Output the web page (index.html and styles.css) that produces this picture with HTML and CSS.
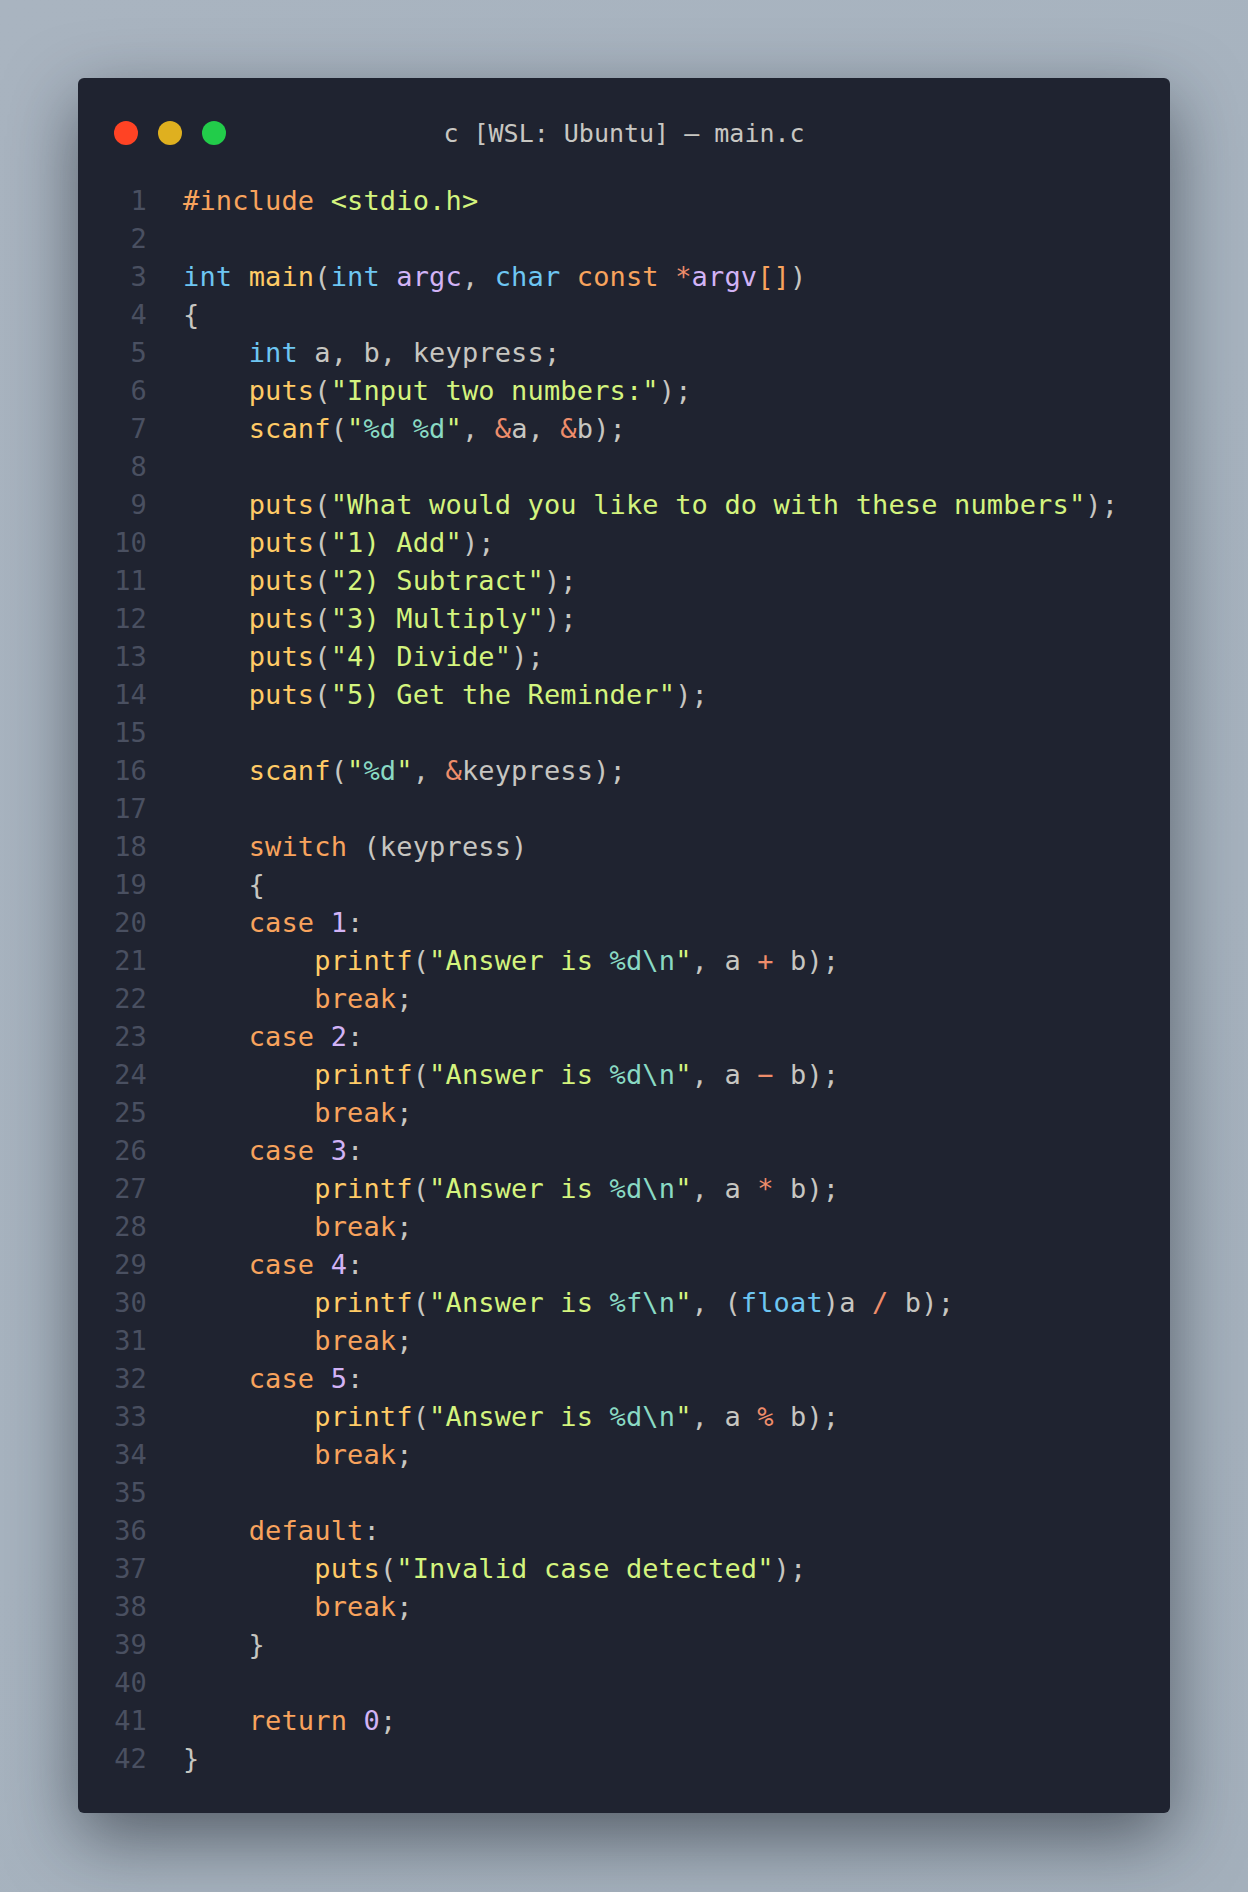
FILE: index.html
```html
<!DOCTYPE html>
<html lang="en">
<head>
<meta charset="utf-8">
<title>main.c</title>
<link rel="stylesheet" href="styles.css">
</head>
<body>
<div class="window">
  <div class="titlebar">
    <div class="dots">
      <span class="dot red"></span>
      <span class="dot yellow"></span>
      <span class="dot green"></span>
    </div>
    <div class="title">c [WSL: Ubuntu] — main.c</div>
    <div class="spacer"></div>
  </div>
  <div class="code">
<div class="ln"><span class="n">1</span><span class="c"><span class="k">#include</span> <span class="s">&lt;stdio.h&gt;</span></span></div>
<div class="ln"><span class="n">2</span><span class="c"></span></div>
<div class="ln"><span class="n">3</span><span class="c"><span class="t">int</span> <span class="f">main</span>(<span class="t">int</span> <span class="v">argc</span>, <span class="t">char</span> <span class="k">const</span> <span class="o">*</span><span class="v">argv</span><span class="k">[]</span>)</span></div>
<div class="ln"><span class="n">4</span><span class="c">{</span></div>
<div class="ln"><span class="n">5</span><span class="c">    <span class="t">int</span> a, b, keypress;</span></div>
<div class="ln"><span class="n">6</span><span class="c">    <span class="f">puts</span>(<span class="s">"Input two numbers:"</span>);</span></div>
<div class="ln"><span class="n">7</span><span class="c">    <span class="f">scanf</span>(<span class="s">"<span class="e">%d</span> <span class="e">%d</span>"</span>, <span class="o">&amp;</span>a, <span class="o">&amp;</span>b);</span></div>
<div class="ln"><span class="n">8</span><span class="c"></span></div>
<div class="ln"><span class="n">9</span><span class="c">    <span class="f">puts</span>(<span class="s">"What would you like to do with these numbers"</span>);</span></div>
<div class="ln"><span class="n">10</span><span class="c">    <span class="f">puts</span>(<span class="s">"1) Add"</span>);</span></div>
<div class="ln"><span class="n">11</span><span class="c">    <span class="f">puts</span>(<span class="s">"2) Subtract"</span>);</span></div>
<div class="ln"><span class="n">12</span><span class="c">    <span class="f">puts</span>(<span class="s">"3) Multiply"</span>);</span></div>
<div class="ln"><span class="n">13</span><span class="c">    <span class="f">puts</span>(<span class="s">"4) Divide"</span>);</span></div>
<div class="ln"><span class="n">14</span><span class="c">    <span class="f">puts</span>(<span class="s">"5) Get the Reminder"</span>);</span></div>
<div class="ln"><span class="n">15</span><span class="c"></span></div>
<div class="ln"><span class="n">16</span><span class="c">    <span class="f">scanf</span>(<span class="s">"<span class="e">%d</span>"</span>, <span class="o">&amp;</span>keypress);</span></div>
<div class="ln"><span class="n">17</span><span class="c"></span></div>
<div class="ln"><span class="n">18</span><span class="c">    <span class="k">switch</span> (keypress)</span></div>
<div class="ln"><span class="n">19</span><span class="c">    {</span></div>
<div class="ln"><span class="n">20</span><span class="c">    <span class="k">case</span> <span class="v">1</span>:</span></div>
<div class="ln"><span class="n">21</span><span class="c">        <span class="f">printf</span>(<span class="s">"Answer is <span class="e">%d\n</span>"</span>, a <span class="o">+</span> b);</span></div>
<div class="ln"><span class="n">22</span><span class="c">        <span class="k">break</span>;</span></div>
<div class="ln"><span class="n">23</span><span class="c">    <span class="k">case</span> <span class="v">2</span>:</span></div>
<div class="ln"><span class="n">24</span><span class="c">        <span class="f">printf</span>(<span class="s">"Answer is <span class="e">%d\n</span>"</span>, a <span class="o">−</span> b);</span></div>
<div class="ln"><span class="n">25</span><span class="c">        <span class="k">break</span>;</span></div>
<div class="ln"><span class="n">26</span><span class="c">    <span class="k">case</span> <span class="v">3</span>:</span></div>
<div class="ln"><span class="n">27</span><span class="c">        <span class="f">printf</span>(<span class="s">"Answer is <span class="e">%d\n</span>"</span>, a <span class="o">*</span> b);</span></div>
<div class="ln"><span class="n">28</span><span class="c">        <span class="k">break</span>;</span></div>
<div class="ln"><span class="n">29</span><span class="c">    <span class="k">case</span> <span class="v">4</span>:</span></div>
<div class="ln"><span class="n">30</span><span class="c">        <span class="f">printf</span>(<span class="s">"Answer is <span class="e">%f\n</span>"</span>, (<span class="t">float</span>)a <span class="o">/</span> b);</span></div>
<div class="ln"><span class="n">31</span><span class="c">        <span class="k">break</span>;</span></div>
<div class="ln"><span class="n">32</span><span class="c">    <span class="k">case</span> <span class="v">5</span>:</span></div>
<div class="ln"><span class="n">33</span><span class="c">        <span class="f">printf</span>(<span class="s">"Answer is <span class="e">%d\n</span>"</span>, a <span class="o">%</span> b);</span></div>
<div class="ln"><span class="n">34</span><span class="c">        <span class="k">break</span>;</span></div>
<div class="ln"><span class="n">35</span><span class="c"></span></div>
<div class="ln"><span class="n">36</span><span class="c">    <span class="k">default</span>:</span></div>
<div class="ln"><span class="n">37</span><span class="c">        <span class="f">puts</span>(<span class="s">"Invalid case detected"</span>);</span></div>
<div class="ln"><span class="n">38</span><span class="c">        <span class="k">break</span>;</span></div>
<div class="ln"><span class="n">39</span><span class="c">    }</span></div>
<div class="ln"><span class="n">40</span><span class="c"></span></div>
<div class="ln"><span class="n">41</span><span class="c">    <span class="k">return</span> <span class="v">0</span>;</span></div>
<div class="ln"><span class="n">42</span><span class="c">}</span></div>
  </div>
</div>
</body>
</html>
```
FILE: styles.css
```css
html, body {
  margin: 0;
  padding: 0;
}

body {
  width: 1248px;
  height: 1892px;
  box-sizing: border-box;
  padding: 78px;
  background: linear-gradient(135deg, #a9b4c0 0%, #a7b3bf 50%, #a4b0bc 100%);
  font-family: "DejaVu Sans Mono", "Liberation Mono", monospace;
}

.window {
  width: 1092px;
  height: 1735px;
  box-sizing: border-box;
  background: #1f2330;
  border-radius: 6px;
  box-shadow: 0 24px 70px rgba(20, 25, 35, 0.55);
  padding: 39px 36px 36px 36px;
}

.titlebar {
  display: grid;
  grid-template-columns: 1fr auto 1fr;
  align-items: center;
  height: 24px;
}

.dots {
  display: flex;
  gap: 20px;
}

.dot {
  width: 24px;
  height: 24px;
  border-radius: 50%;
}

.red { background: #ff4324; }
.yellow { background: #dfb01f; }
.green { background: #22cc4a; }

.title {
  color: #c8c7c2;
  font-size: 25px;
  padding-top: 2px;
  white-space: pre;
}

.code {
  margin-top: 41px;
  font-size: 27px;
  line-height: 38px;
  letter-spacing: 0.15px;
  color: #c7c6c1;
}

.ln {
  display: flex;
  height: 38px;
  white-space: pre;
}

.n {
  width: 33px;
  text-align: right;
  color: #4a5061;
  flex: none;
}

.c {
  margin-left: 36px;
}

.k { color: #f8a35d; }
.t { color: #6ec6f2; }
.f { color: #ffcb66; }
.v { color: #d2b3f6; }
.s { color: #d4f47e; }
.e { color: #8adac4; }
.o { color: #ee8d6b; }
```
